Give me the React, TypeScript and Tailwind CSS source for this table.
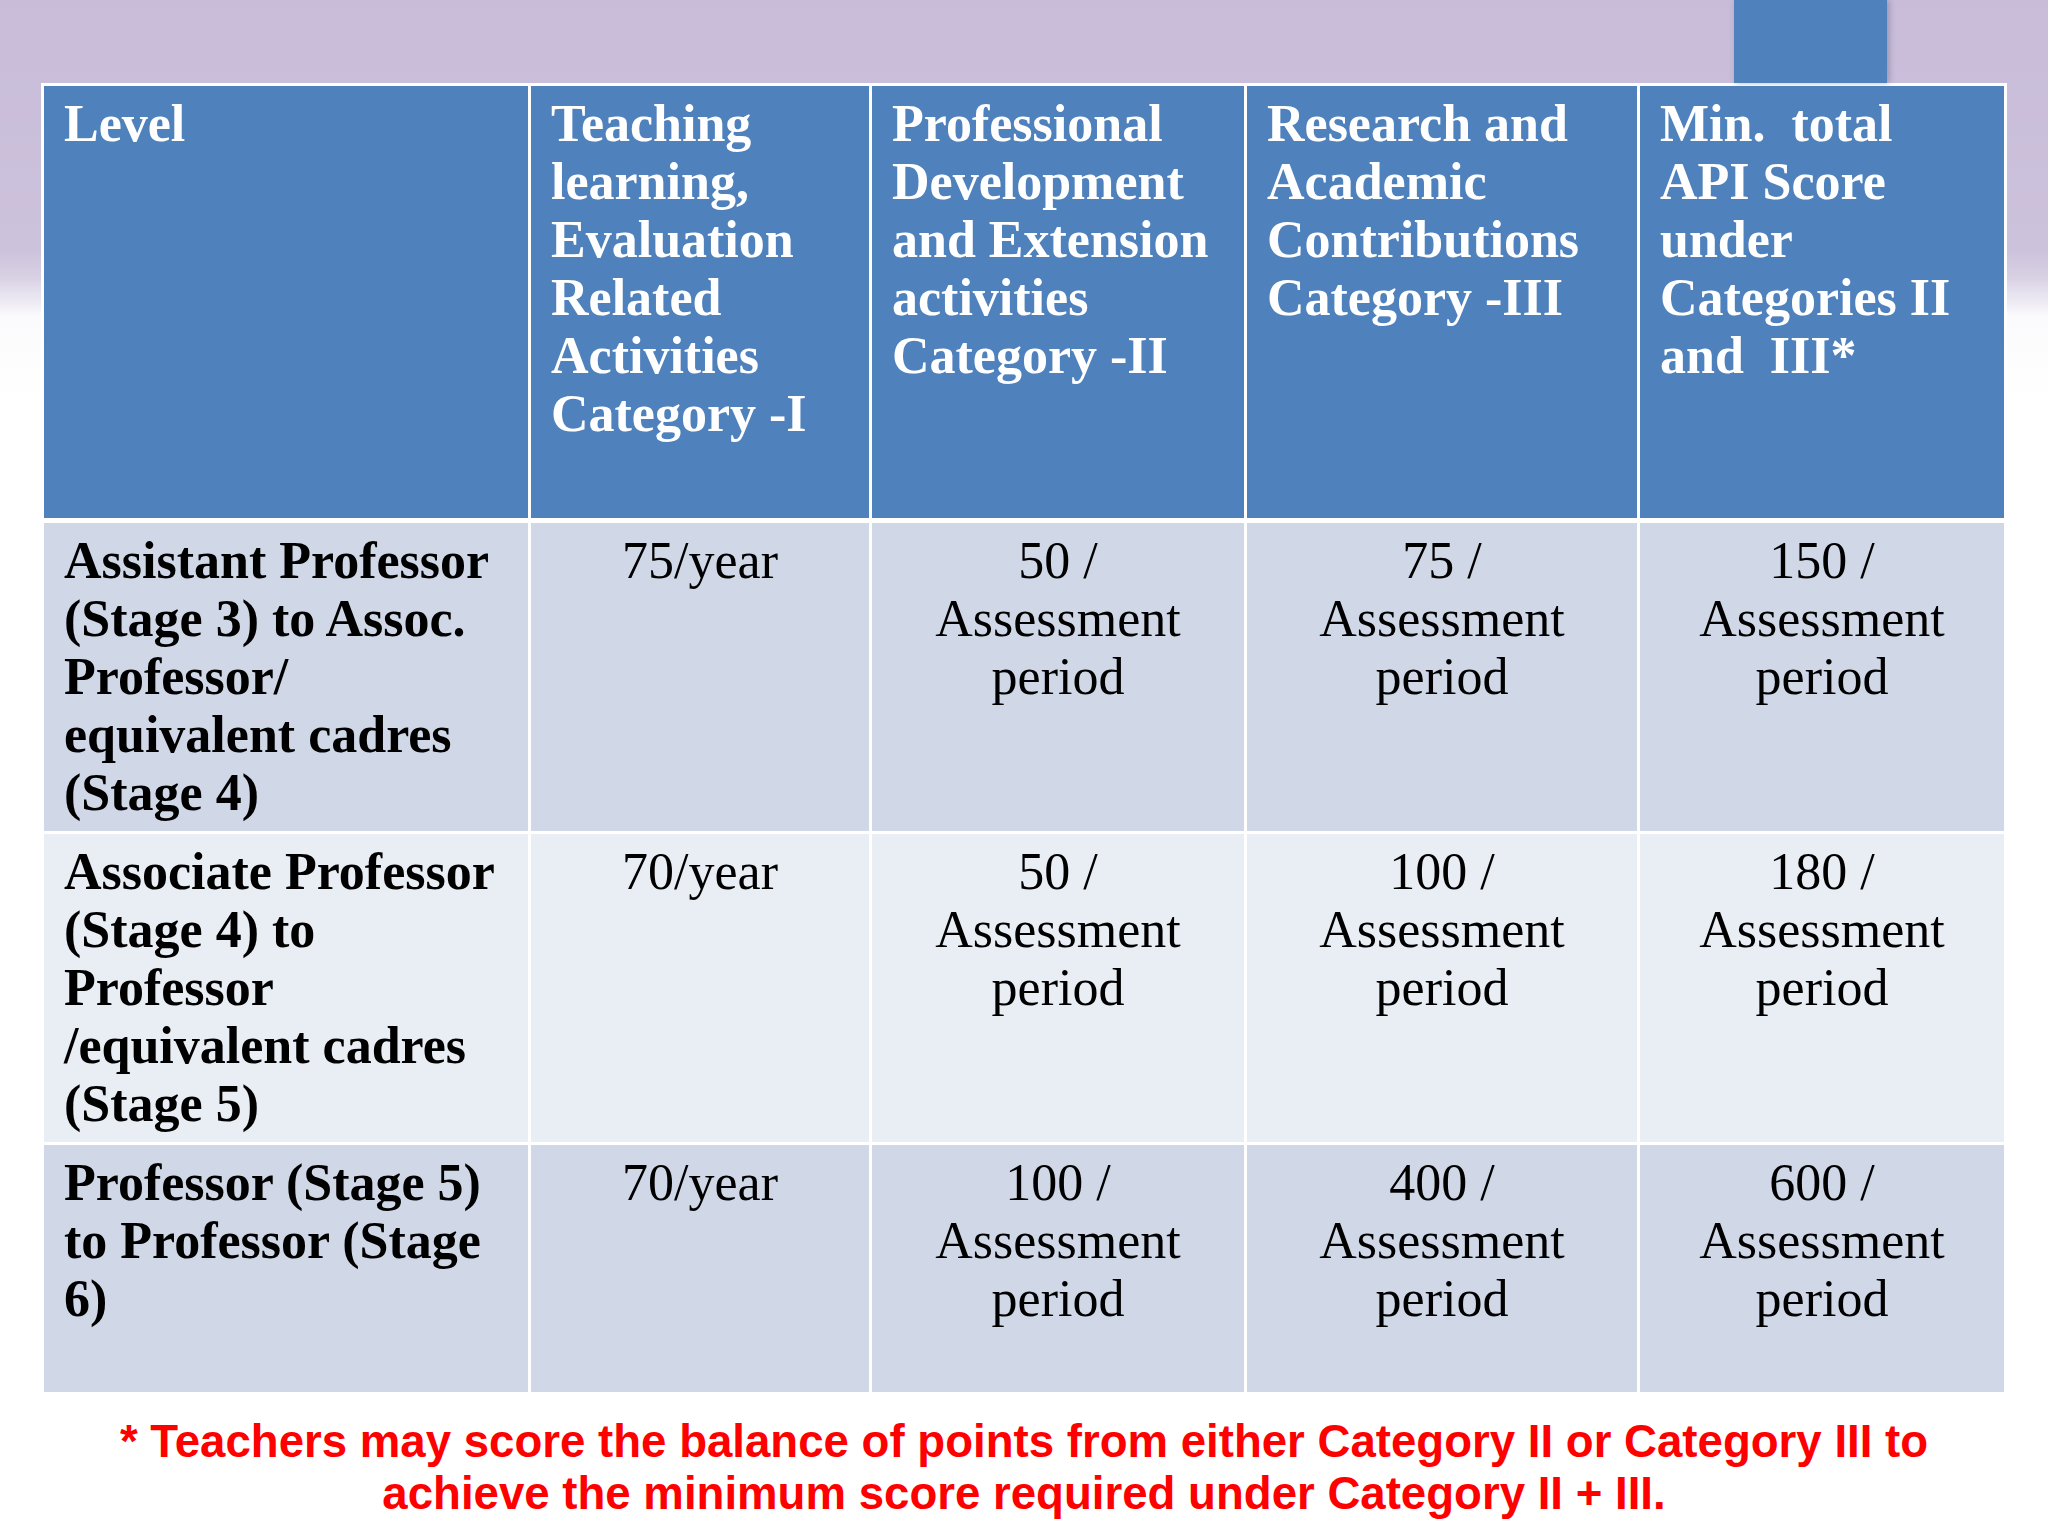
const header = [
  ["Level"],
  ["Teaching", "learning,", "Evaluation", "Related", "Activities", "Category -I"],
  ["Professional", "Development", "and Extension", "activities", "Category -II"],
  ["Research and", "Academic", "Contributions", "Category -III"],
  ["Min.  total", "API Score", "under", "Categories II", "and  III*"],
];

const rows = [
  {
    level: ["Assistant Professor", "(Stage 3) to Assoc.", "Professor/", "equivalent cadres", "(Stage 4)"],
    values: ["75/year", "50 /", "75 /", "150 /"],
    bg: "bg-[#d0d8e8]",
    h: "h-[308px]",
  },
  {
    level: ["Associate Professor", "(Stage 4) to", "Professor", "/equivalent cadres", "(Stage 5)"],
    values: ["70/year", "50 /", "100 /", "180 /"],
    bg: "bg-[#e9edf4]",
    h: "h-[308px]",
  },
  {
    level: ["Professor (Stage 5)", "to Professor (Stage", "6)"],
    values: ["70/year", "100 /", "400 /", "600 /"],
    bg: "bg-[#d0d8e8]",
    h: "h-[247px]",
  },
];

const serif = "font-['Liberation_Serif',_'Times_New_Roman',serif]";

const Lines = ({ lines }: { lines: string[] }) => (
  <>
    {lines.map((l, i) => (
      <div key={i} className="whitespace-pre">
        {l}
      </div>
    ))}
  </>
);

export default function App() {
  return (
    <div className="w-[2048px] h-[1536px] overflow-hidden bg-[linear-gradient(180deg,#c8bcd9_0px,#cdc2dc_250px,#d8d1e3_278px,#e6e1ee_292px,#f1eef5_306px,#fbfbfd_316px,#ffffff_400px)]">
      {/* top tab */}
      <div className="h-[83px] flex">
        <div className="ml-[1734px] w-[153px] h-full bg-[#4f81bd] shadow-[2px_0_6px_rgba(60,60,90,0.35)]" />
      </div>

      {/* table */}
      <div
        className={`ml-[41px] w-[1966px] bg-white p-[3px] grid grid-cols-[484px_338px_372px_390px_364px] gap-[3px] text-[52px] leading-[58px] ${serif}`}
      >
        {header.map((lines, i) => (
          <div
            key={i}
            className="h-[434px] bg-[#4f81bd] border-b-[2px] border-white px-[20px] pt-[9px] font-bold text-white"
          >
            <Lines lines={lines} />
          </div>
        ))}

        {rows.map((r, ri) => (
          <div key={ri} className="contents">
            <div className={`${r.h} ${r.bg} px-[20px] pt-[9px] font-bold text-black`}>
              <Lines lines={r.level} />
            </div>
            {r.values.map((v, vi) => (
              <div key={vi} className={`${r.h} ${r.bg} px-[20px] pt-[9px] text-center text-black`}>
                {vi === 0 ? <div>{v}</div> : <Lines lines={[v, "Assessment", "period"]} />}
              </div>
            ))}
          </div>
        ))}
      </div>

      {/* footnote */}
      <div className="mt-[21px] text-center font-['Liberation_Sans',Arial,sans-serif] font-bold text-[45.6px] leading-[52px] text-[#ff0000]">
        <div>* Teachers may score the balance of points from either Category II or Category III to</div>
        <div>achieve the minimum score required under Category II + III.</div>
      </div>
    </div>
  );
}
